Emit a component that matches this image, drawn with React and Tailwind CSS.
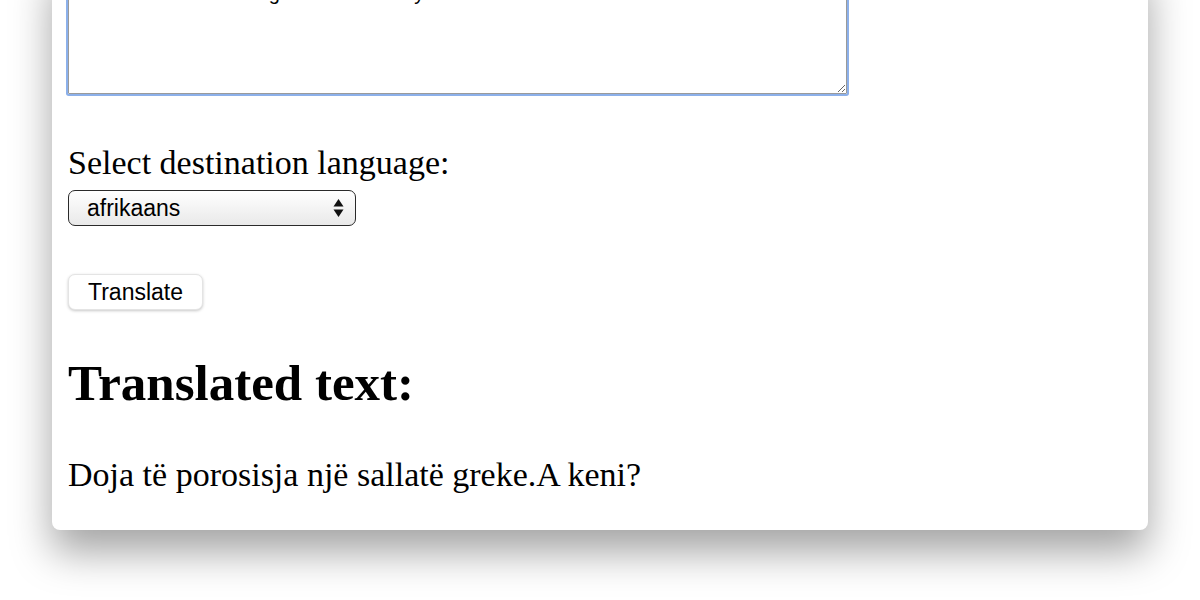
import { useState } from 'react';

const LANGUAGES = ['afrikaans', 'albanian', 'arabic', 'french', 'german', 'greek', 'spanish'];

export default function App() {
  const [text, setText] = useState('I would like to order a greek salad. Do you have it?');
  const [lang, setLang] = useState('afrikaans');

  return (
    <div className="min-h-[600px] bg-white overflow-hidden">
      {/* page card, scrolled so its top is out of view */}
      <div className="mx-[52px] -mt-[40px] bg-white rounded-b-lg shadow-[0_22px_40px_rgba(0,0,0,0.36)] pl-[16px] pt-[19px] pb-[36px] font-['Liberation_Serif',serif] text-black">
        <textarea
          value={text}
          onChange={(e) => setText(e.target.value)}
          className="block w-[779px] h-[115px] px-[4px] py-[2px] border border-[#9a9a9a] shadow-[0_0_0_2px_#8cb0ea] rounded-[1px] font-['Liberation_Sans',sans-serif] text-[20px] leading-[23px] outline-none resize"
        />

        <p className="mt-[50px] text-[34px] leading-[38px]">Select destination language:</p>

        <div className="relative mt-[8px] w-[288px] h-[36px]">
          <select
            value={lang}
            onChange={(e) => setLang(e.target.value)}
            className="appearance-none w-full h-full pl-[18px] pr-[30px] border border-[#2a2a2a] rounded-[7px] bg-[linear-gradient(#ffffff,#e9e9e9)] font-['Liberation_Sans',sans-serif] text-[23px] text-black outline-none"
          >
            {LANGUAGES.map((l) => (
              <option key={l} value={l}>{l}</option>
            ))}
          </select>
          {/* up/down arrows */}
          <svg className="absolute right-[12px] top-[7px] pointer-events-none" width="11" height="22" viewBox="0 0 11 22">
            <path d="M5.5 2 L10.5 9.5 L0.5 9.5 Z" fill="#111" />
            <path d="M5.5 20 L10.5 12.5 L0.5 12.5 Z" fill="#111" />
          </svg>
        </div>

        <button className="block mt-[48px] w-[135px] h-[36px] bg-white rounded-[7px] border border-[#e4e4e4] shadow-[0_1px_3px_rgba(0,0,0,0.22)] font-['Liberation_Sans',sans-serif] text-[23px] text-black">
          Translate
        </button>

        <h2 className="mt-[43px] text-[51px] leading-[60px] font-bold">Translated text:</h2>

        <p className="mt-[43px] text-[34px] leading-[38px]">Doja të porosisja një sallatë greke.A keni?</p>
      </div>
    </div>
  );
}
